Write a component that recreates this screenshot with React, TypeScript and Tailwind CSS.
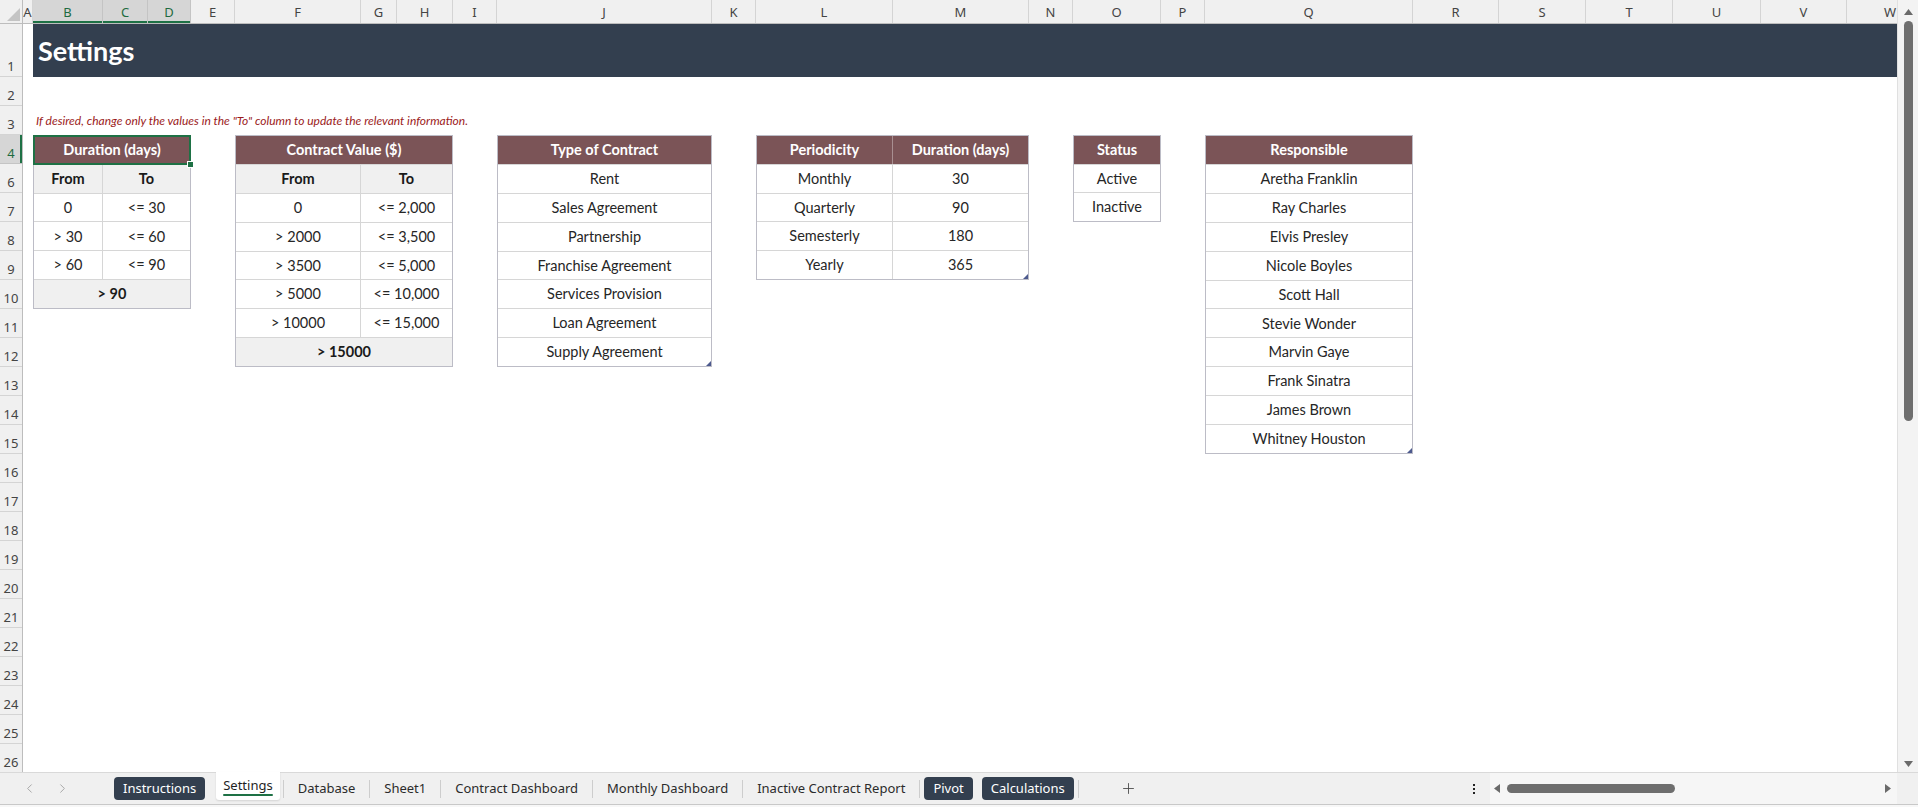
import React from 'react';
import { ChevronLeft, ChevronRight, Plus } from 'lucide-react';

const columns = [
  { label: 'A', w: 'w-[10px]', sel: false },
  { label: 'B', w: 'w-[70px]', sel: true },
  { label: 'C', w: 'w-[45px]', sel: true },
  { label: 'D', w: 'w-[43px]', sel: true },
  { label: 'E', w: 'w-[44px]', sel: false },
  { label: 'F', w: 'w-[126px]', sel: false },
  { label: 'G', w: 'w-[36px]', sel: false },
  { label: 'H', w: 'w-[56px]', sel: false },
  { label: 'I', w: 'w-[44px]', sel: false },
  { label: 'J', w: 'w-[215px]', sel: false },
  { label: 'K', w: 'w-[44px]', sel: false },
  { label: 'L', w: 'w-[137px]', sel: false },
  { label: 'M', w: 'w-[136px]', sel: false },
  { label: 'N', w: 'w-[44px]', sel: false },
  { label: 'O', w: 'w-[88px]', sel: false },
  { label: 'P', w: 'w-[44px]', sel: false },
  { label: 'Q', w: 'w-[208px]', sel: false },
  { label: 'R', w: 'w-[86px]', sel: false },
  { label: 'S', w: 'w-[87px]', sel: false },
  { label: 'T', w: 'w-[87px]', sel: false },
  { label: 'U', w: 'w-[88px]', sel: false },
  { label: 'V', w: 'w-[86px]', sel: false },
  { label: 'W', w: 'w-[87px]', sel: false },
];

const rowNumbers = [1, 2, 3, 4, 6, 7, 8, 9, 10, 11, 12, 13, 14, 15, 16, 17, 18, 19, 20, 21, 22, 23, 24, 25, 26];

const durationRows = [
  ['0', '<= 30'],
  ['> 30', '<= 60'],
  ['> 60', '<= 90'],
];

const valueRows = [
  ['0', '<= 2,000'],
  ['> 2000', '<= 3,500'],
  ['> 3500', '<= 5,000'],
  ['> 5000', '<= 10,000'],
  ['> 10000', '<= 15,000'],
];

const contractTypes = ['Rent', 'Sales Agreement', 'Partnership', 'Franchise Agreement', 'Services Provision', 'Loan Agreement', 'Supply Agreement'];

const periods = [
  ['Monthly', '30'],
  ['Quarterly', '90'],
  ['Semesterly', '180'],
  ['Yearly', '365'],
];

const people = ['Aretha Franklin', 'Ray Charles', 'Elvis Presley', 'Nicole Boyles', 'Scott Hall', 'Stevie Wonder', 'Marvin Gaye', 'Frank Sinatra', 'James Brown', 'Whitney Houston'];

const tableBox = "relative flex flex-col border border-[#bcbcc6] bg-white font-['Lato',sans-serif] text-[14.5px] text-[#262626]";
const headRow = 'flex-1 flex items-center justify-center bg-[#7b5457] text-white font-bold';
const bodyRow = 'flex-1 flex items-center justify-center border-t border-[#d6d6d6]';
const greyRow = 'flex-1 flex items-center justify-center border-t border-[#d6d6d6] bg-[#f0f0f0] font-bold text-[#1a1a1a]';

function ResizeMark() {
  return (
    <svg className="absolute right-0 bottom-0" width="5" height="5" viewBox="0 0 5 5">
      <polygon points="5,0 5,5 0,5" fill="#4d5a8e" />
    </svg>
  );
}

function Sheet() {
  return (
    <div className="grid grid-cols-[10px_70px_45px_43px_44px_126px_36px_56px_44px_215px_44px_137px_136px_44px_88px_44px_208px_86px_87px_87px_88px_86px_87px] grid-rows-[53px_repeat(24,29px)]">
      <div className="col-[2/-1] row-[1/2] bg-[#333f4f] flex items-center pl-[5px] pt-[2px]">
        <span className="font-['Lato',sans-serif] font-bold text-[27px] text-white">Settings</span>
      </div>

      <div className="col-[2/12] row-[3/4] flex items-center pl-[3px] pt-[1px]">
        <span className="font-['Lato',sans-serif] italic text-[12px] text-[#9b1b1b]">
          If desired, change only the values in the "To" column to update the relevant information.
        </span>
      </div>

      <div className={`col-[2/5] row-[4/10] ${tableBox}`}>
        <div className={`${headRow} relative`}>
          Duration (days)
          <div className="absolute -inset-[1px] border-2 border-[#1e7145]" />
          <div className="absolute -right-[4px] -bottom-[4px] w-[7px] h-[7px] bg-[#1e7145] border border-white" />
        </div>
        <div className={`${greyRow} justify-start`}>
          <div className="w-[69px] h-full flex items-center justify-center border-r border-[#d6d6d6]">From</div>
          <div className="flex-1 h-full flex items-center justify-center">To</div>
        </div>
        {durationRows.map(([from, to]) => (
          <div key={from} className={`${bodyRow} justify-start`}>
            <div className="w-[69px] h-full flex items-center justify-center border-r border-[#d6d6d6]">{from}</div>
            <div className="flex-1 h-full flex items-center justify-center">{to}</div>
          </div>
        ))}
        <div className={greyRow}>&gt; 90</div>
      </div>

      <div className={`col-[6/9] row-[4/12] ${tableBox}`}>
        <div className={headRow}>Contract Value ($)</div>
        <div className={`${greyRow} justify-start`}>
          <div className="w-[125px] h-full flex items-center justify-center border-r border-[#d6d6d6]">From</div>
          <div className="flex-1 h-full flex items-center justify-center">To</div>
        </div>
        {valueRows.map(([from, to]) => (
          <div key={from} className={`${bodyRow} justify-start`}>
            <div className="w-[125px] h-full flex items-center justify-center border-r border-[#d6d6d6]">{from}</div>
            <div className="flex-1 h-full flex items-center justify-center">{to}</div>
          </div>
        ))}
        <div className={greyRow}>&gt; 15000</div>
      </div>

      <div className={`col-[10/11] row-[4/12] ${tableBox}`}>
        <div className={headRow}>Type of Contract</div>
        {contractTypes.map((t) => (
          <div key={t} className={bodyRow}>{t}</div>
        ))}
        <ResizeMark />
      </div>

      <div className={`col-[12/14] row-[4/9] ${tableBox}`}>
        <div className={`${headRow} justify-start`}>
          <div className="w-[136px] h-full flex items-center justify-center border-r border-[#a88f91]">Periodicity</div>
          <div className="flex-1 h-full flex items-center justify-center">Duration (days)</div>
        </div>
        {periods.map(([p, d]) => (
          <div key={p} className={`${bodyRow} justify-start`}>
            <div className="w-[136px] h-full flex items-center justify-center border-r border-[#d6d6d6]">{p}</div>
            <div className="flex-1 h-full flex items-center justify-center">{d}</div>
          </div>
        ))}
        <ResizeMark />
      </div>

      <div className={`col-[15/16] row-[4/7] ${tableBox}`}>
        <div className={headRow}>Status</div>
        <div className={bodyRow}>Active</div>
        <div className={bodyRow}>Inactive</div>
      </div>

      <div className={`col-[17/18] row-[4/15] ${tableBox}`}>
        <div className={headRow}>Responsible</div>
        {people.map((p) => (
          <div key={p} className={bodyRow}>{p}</div>
        ))}
        <ResizeMark />
      </div>
    </div>
  );
}

function SheetTab({ label }: { label: string }) {
  return (
    <>
      <div className="px-[14px] text-[#2b2b2b]">{label}</div>
      <div className="w-px h-[18px] bg-[#cdcdcd]" />
    </>
  );
}

export default function App() {
  return (
    <div className="w-[1918px] h-[807px] overflow-hidden bg-white flex flex-col font-['Noto_Sans',sans-serif]">
      <div className="h-[772px] flex">
        <div className="w-[1897px] h-full overflow-hidden flex flex-col">
          {/* column headers */}
          <div className="h-[24px] flex shrink-0 bg-[#f0f0f0] border-b border-[#bdbdbd]">
            <div className="w-[23px] shrink-0 border-r border-[#bdbdbd] relative">
              <svg className="absolute left-[7px] top-[8px]" width="13" height="13" viewBox="0 0 13 13">
                <polygon points="13,0 13,13 0,13" fill="#c4c4c4" />
              </svg>
            </div>
            {columns.map((c) => (
              <div
                key={c.label}
                className={`${c.w} shrink-0 flex items-center justify-center pt-[2px] text-[13px] border-r ${
                  c.sel
                    ? 'bg-[#d6d6d6] text-[#1e6b40] border-[#c4c4c4] shadow-[inset_0_-2px_0_#1e7145]'
                    : 'text-[#444] border-[#d4d4d4]'
                }`}
              >
                {c.label}
              </div>
            ))}
          </div>
          <div className="flex flex-1 min-h-0">
            {/* row headers */}
            <div className="w-[23px] shrink-0 flex flex-col bg-[#f0f0f0] border-r border-[#bdbdbd]">
              {rowNumbers.map((n) => (
                <div
                  key={n}
                  className={`${n === 1 ? 'h-[53px]' : 'h-[29px]'} shrink-0 flex items-end justify-center pb-[1px] text-[13px] leading-[17px] border-b ${
                    n === 4
                      ? 'bg-[#d6d6d6] text-[#1e6b40] border-[#c4c4c4] shadow-[inset_-2px_0_0_#1e7145]'
                      : 'text-[#444] border-[#d4d4d4]'
                  }`}
                >
                  {n}
                </div>
              ))}
            </div>
            <div className="flex-1 overflow-hidden">
              <Sheet />
            </div>
          </div>
        </div>
        {/* vertical scrollbar */}
        <div className="w-[21px] h-full bg-[#f3f3f3] border-l border-[#e0e0e0] flex flex-col items-center">
          <svg className="mt-[9px]" width="9" height="6" viewBox="0 0 9 6">
            <polygon points="4.5,0 9,6 0,6" fill="#6a6a6a" />
          </svg>
          <div className="mt-[6px] w-[9px] h-[400px] rounded-full bg-[#6e6e6e]" />
          <div className="flex-1" />
          <svg className="mb-[5px]" width="9" height="6" viewBox="0 0 9 6">
            <polygon points="0,0 9,0 4.5,6" fill="#6a6a6a" />
          </svg>
        </div>
      </div>

      {/* sheet tabs bar */}
      <div className="h-[32px] flex items-center bg-[#f0f0f0] border-t border-[#d9d9d9] text-[13px] font-['Noto_Sans',sans-serif]">
        <div className="w-[114px] shrink-0 flex items-center pl-[22px] gap-[18px] text-[#a3a3a3]">
          <ChevronLeft size={15} strokeWidth={1.5} />
          <ChevronRight size={15} strokeWidth={1.5} />
        </div>
        <div className="h-[23px] px-[9px] flex items-center rounded-[4px] bg-[#333f4f] text-white">Instructions</div>
        <div className="ml-[11px] self-start -mt-px h-[28px] px-[7px] bg-white rounded-b-[3px] shadow-[0_1px_2px_rgba(0,0,0,0.12)] flex flex-col items-center justify-center">
          <span className="text-[#1f1f1f] leading-[18px]">Settings</span>
          <span className="w-full h-[2px] bg-[#1e7145] rounded-full" />
        </div>
        <div className="ml-[3px] w-px h-[18px] bg-[#cdcdcd]" />
        <SheetTab label="Database" />
        <SheetTab label="Sheet1" />
        <SheetTab label="Contract Dashboard" />
        <SheetTab label="Monthly Dashboard" />
        <SheetTab label="Inactive Contract Report" />
        <div className="ml-[4px] h-[23px] px-[9px] flex items-center rounded-[4px] bg-[#333f4f] text-white">Pivot</div>
        <div className="ml-[9px] h-[23px] px-[9px] flex items-center rounded-[4px] bg-[#333f4f] text-white">Calculations</div>
        <div className="ml-[4px] w-px h-[18px] bg-[#cdcdcd]" />
        <div className="ml-[41px] text-[#4a4a4a]">
          <Plus size={17} strokeWidth={1.25} />
        </div>
        <div className="flex-1" />
        <div className="flex flex-col gap-[2px] items-center w-[4px]">
          <span className="w-[2px] h-[2px] bg-[#222]" />
          <span className="w-[2px] h-[2px] bg-[#222]" />
          <span className="w-[2px] h-[2px] bg-[#222]" />
        </div>
        <div className="ml-[14px] w-[407px] h-full flex items-center bg-[#f6f6f6] pl-[4px] pr-[6px]">
          <svg width="6" height="9" viewBox="0 0 6 9">
            <polygon points="6,0 6,9 0,4.5" fill="#6a6a6a" />
          </svg>
          <div className="ml-[7px] w-[168px] h-[9px] rounded-full bg-[#6e6e6e]" />
          <div className="flex-1" />
          <svg width="6" height="9" viewBox="0 0 6 9">
            <polygon points="0,0 6,4.5 0,9" fill="#6a6a6a" />
          </svg>
        </div>
        <div className="w-[21px] shrink-0" />
      </div>
      <div className="h-px bg-[#c8c8c8]" />
      <div className="flex-1 bg-[#f7f7f7]" />
    </div>
  );
}
